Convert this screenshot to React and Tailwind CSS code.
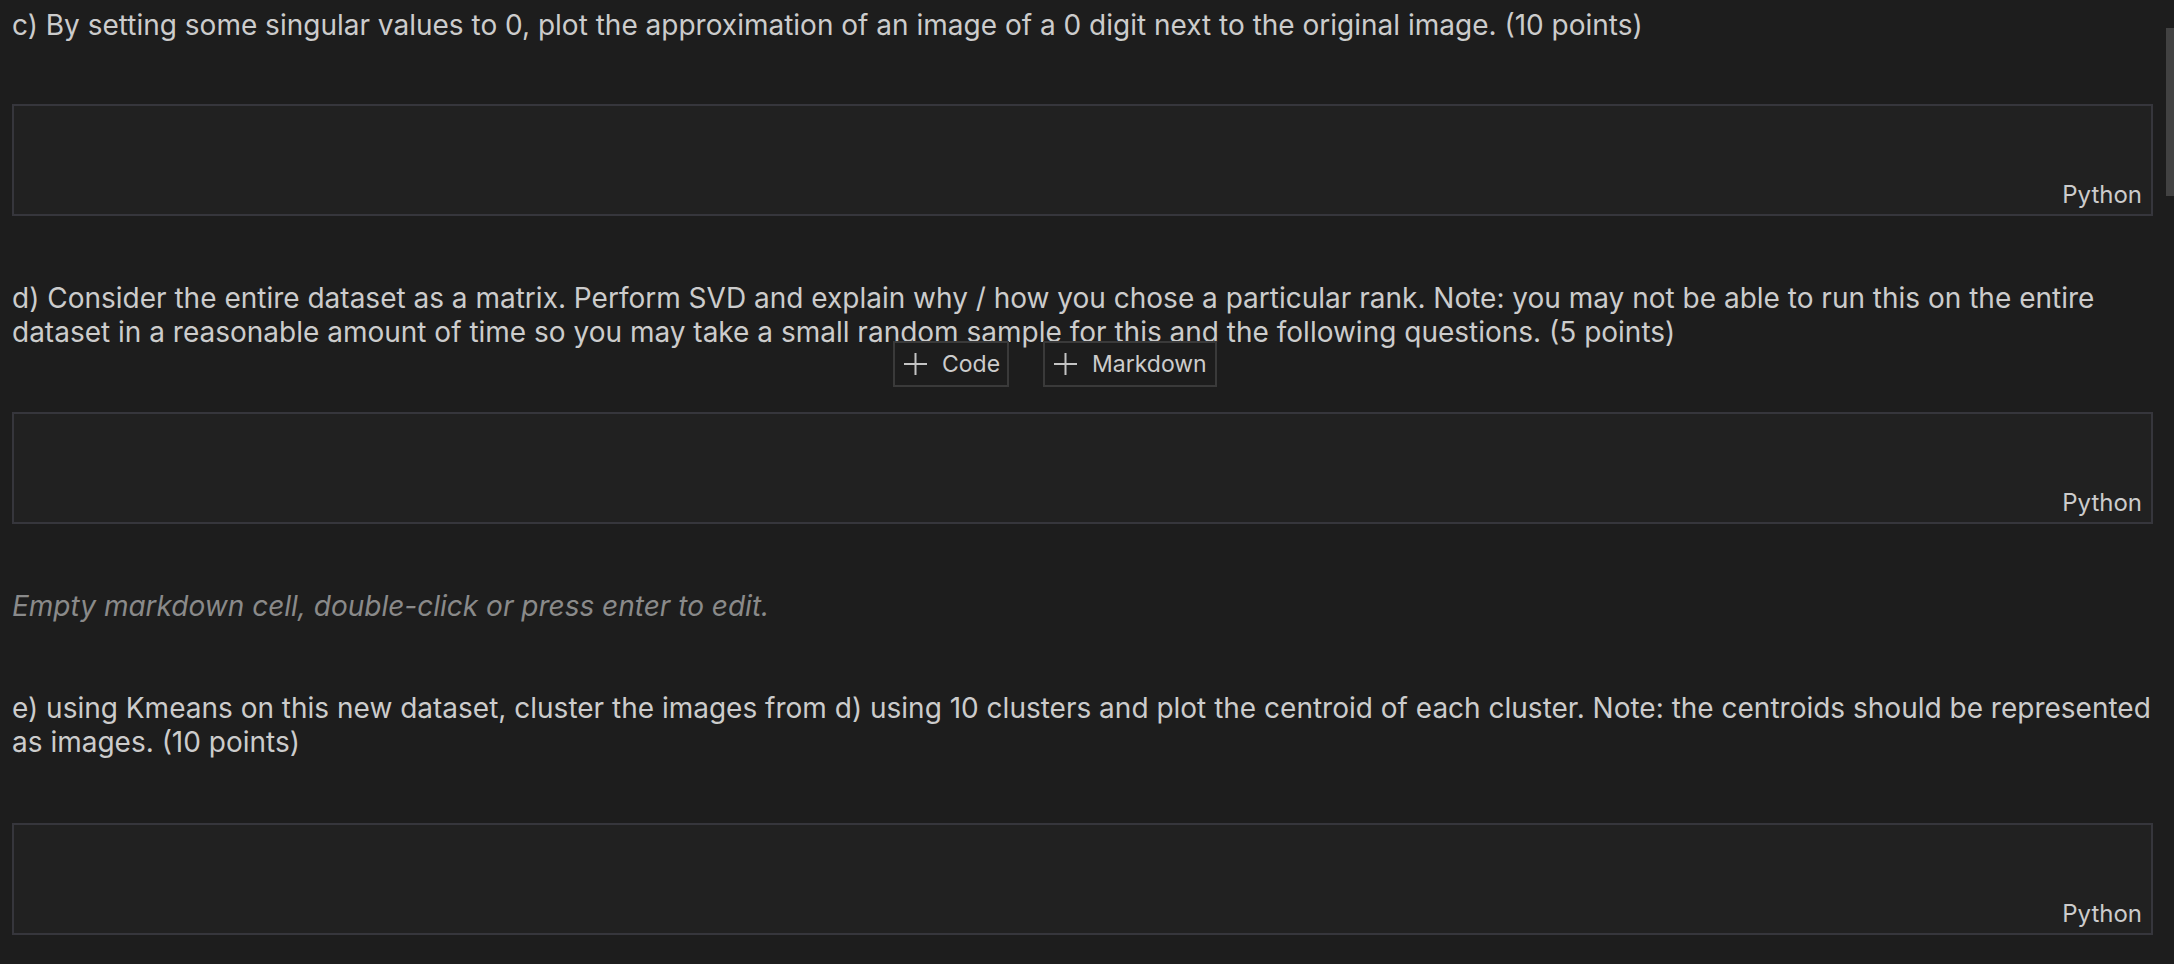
import React from "react";

function CodeCell() {
  return (
    <div className="h-[112px] border-2 border-[#36363c] bg-[#212121] flex items-end justify-end pr-[9px] pb-[4px]">
      <span className="text-[24px] leading-[30px] text-[#cccccc]">Python</span>
    </div>
  );
}

function Plus() {
  return (
    <svg width="23" height="22" viewBox="0 0 23 22" className="shrink-0">
      <path d="M11.5 0V22M0 11H23" stroke="#c4c4c4" strokeWidth="2" fill="none" />
    </svg>
  );
}

function Line({ children, className = "" }) {
  return <div className={"whitespace-nowrap " + className}>{children}</div>;
}

export default function App() {
  return (
    <div className="relative w-[2174px] h-[964px] overflow-hidden bg-[#1d1d1d] text-[#cccccc] font-['Inter',sans-serif]">
      <div className="pl-[12px] pr-[21px] pt-[8px] text-[28px] leading-[34px]">
        <Line>
          c) By setting some singular values to 0, plot the approximation of an image of a 0 digit next to the original image. (10 points)
        </Line>

        <div className="mt-[62px]">
          <CodeCell />
        </div>

        <div className="relative mt-[65px]">
          <Line>
            d) Consider the entire dataset as a matrix. Perform SVD and explain why / how you chose a particular rank. Note: you may not be able to run this on the entire
          </Line>
          <Line>
            dataset in a reasonable amount of time so you may take a small random sample for this and the following questions. (5 points)
          </Line>
          <div className="absolute top-[60px] left-[881px] flex gap-[34px]">
            <div className="h-[46px] w-[116px] border-2 border-[#3a3a3a] bg-[#1d1d1d] flex items-center pl-[9px] gap-[15px]">
              <Plus />
              <span className="text-[23px] leading-[28px] text-[#cccccc]">Code</span>
            </div>
            <div className="h-[46px] w-[174px] border-2 border-[#3a3a3a] bg-[#1d1d1d] flex items-center pl-[9px] gap-[15px]">
              <Plus />
              <span className="text-[23px] leading-[28px] text-[#cccccc]">Markdown</span>
            </div>
          </div>
        </div>

        <div className="mt-[63px]">
          <CodeCell />
        </div>

        <Line className="mt-[65px] italic text-[#8a8a8a]">
          Empty markdown cell, double-click or press enter to edit.
        </Line>

        <div className="mt-[68px]">
          <Line>
            e) using Kmeans on this new dataset, cluster the images from d) using 10 clusters and plot the centroid of each cluster. Note: the centroids should be represented
          </Line>
          <Line>as images. (10 points)</Line>
        </div>

        <div className="mt-[64px]">
          <CodeCell />
        </div>
      </div>

      <div className="absolute right-0 top-[28px] w-[8px] h-[168px] bg-[#424242]" />
    </div>
  );
}
